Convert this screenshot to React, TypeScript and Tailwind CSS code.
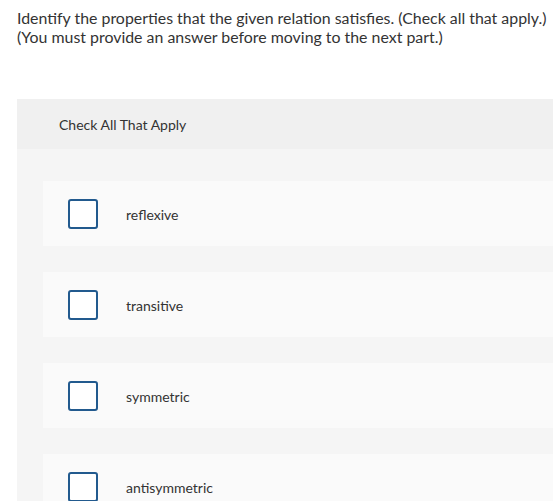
const options = ["reflexive", "transitive", "symmetric", "antisymmetric"];

export default function App() {
  return (
    <div
      className="w-[553px] h-[501px] overflow-hidden bg-white text-[#333]"
      style={{ fontFamily: "Lato, 'Open Sans', sans-serif" }}
    >
      <div className="pl-[17px] pt-[8px] text-[15.9px] leading-[19px]">
        <p>Identify the properties that the given relation satisfies. (Check all that apply.)</p>
        <p>(You must provide an answer before moving to the next part.)</p>
      </div>

      <div className="ml-[17px] mt-[53px] w-[600px]">
        {/* Header */}
        <div className="h-[50px] bg-[#f0f0f0] flex items-center pl-[42px] text-[14px]">
          Check All That Apply
        </div>

        {/* Options */}
        <div className="bg-[#f5f5f5] pt-[32px] pl-[26px] flex flex-col gap-[26px]">
          {options.map((opt) => (
            <div key={opt} className="h-[65px] bg-[#fafafa] flex items-center pl-[25px]">
              <div className="w-[30px] h-[30px] border-2 border-[#225a8e] rounded-[3px] bg-white shrink-0" />
              <span className="ml-[28px] text-[14px] pt-[1px]">{opt}</span>
            </div>
          ))}
        </div>
      </div>
    </div>
  );
}
